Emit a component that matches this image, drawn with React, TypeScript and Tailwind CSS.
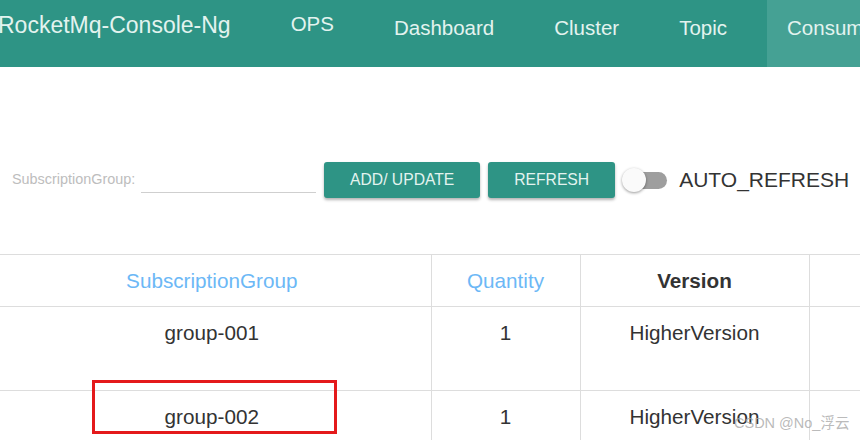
export default function App() {
  const nav = ["Dashboard", "Cluster", "Topic"];
  const rows = [
    { group: "group-001", qty: "1", version: "HigherVersion" },
    { group: "group-002", qty: "1", version: "HigherVersion" },
  ];

  return (
    <div className="relative w-full h-[440px] overflow-hidden bg-white font-['Liberation_Sans',Arial,sans-serif] text-[#333]">
      {/* top bar */}
      <div className="flex h-[67px] bg-[#2e9485] text-[#e3f3ef] -ml-[22px] gap-[20px] leading-[1.2]">
        <div className="px-[20px] pt-[12px] text-[23px] whitespace-nowrap">RocketMq-Console-Ng</div>
        <div className="px-[20px] pt-[12px] text-[20.5px]">OPS</div>
        {nav.map((n) => (
          <div key={n} className="px-[20px] pt-[16px] text-[20.5px]">
            {n}
          </div>
        ))}
        <div className="px-[20px] pt-[16px] text-[20.5px] bg-[#45a194] flex-1 whitespace-nowrap">Consumer</div>
      </div>

      {/* toolbar */}
      <div className="flex items-center h-[36px] mt-[95px] pl-[12px]">
        <span className="text-[14.4px] text-[#bdbdbd]">SubscriptionGroup:</span>
        <input className="ml-[6px] w-[175px] h-[26px] border-b border-[#cfcfcf] outline-none text-[14px]" />
        <button className="ml-[8px] w-[156px] h-[36px] rounded-[3px] bg-[#2e9485] text-[#e3f3ef] text-[15.7px] shadow-[0_2px_3px_rgba(0,0,0,0.3)]">
          ADD/ UPDATE
        </button>
        <button className="ml-[8px] w-[127px] h-[36px] rounded-[3px] bg-[#2e9485] text-[#e3f3ef] text-[15.7px] shadow-[0_2px_3px_rgba(0,0,0,0.3)]">
          REFRESH
        </button>
        <div className="relative ml-[7px] w-[45px] h-[26px] flex items-center">
          <div className="ml-[3px] w-[42px] h-[17px] rounded-full bg-[#9e9e9e]" />
          <div className="absolute left-0 top-[1px] w-[24px] h-[24px] rounded-full bg-[#fafafa] shadow-[0_1px_3px_rgba(0,0,0,0.4)]" />
        </div>
        <span className="ml-[12px] text-[21px] text-[#333]">AUTO_REFRESH</span>
      </div>

      {/* table */}
      <table className="mt-[56px] -ml-[7px] border-collapse table-fixed w-[920px] text-[20.7px]">
        <colgroup>
          <col className="w-[438px]" />
          <col className="w-[149px]" />
          <col className="w-[229px]" />
          <col />
        </colgroup>
        <thead>
          <tr className="h-[52px] border-t border-[#dddddd]">
            <th className="font-normal text-[#6cb8f6] border-b border-[#dddddd]">SubscriptionGroup</th>
            <th className="font-normal text-[#6cb8f6] border border-[#dddddd]">Quantity</th>
            <th className="font-bold text-[#333] border border-[#dddddd]">Version</th>
            <th className="border border-[#dddddd]" />
          </tr>
        </thead>
        <tbody>
          {rows.map((r, i) => (
            <tr key={r.group} className="h-[84px]">
              <td className="relative align-top text-center pt-[10px] border-b border-[#dddddd]">
                {r.group}
                {i === 1 && (
                  <div className="absolute left-[99px] top-[-11px] w-[245px] h-[54px] border-[3px] border-[#e4191b]" />
                )}
              </td>
              <td className="align-top text-center pt-[10px] border border-[#dddddd]">{r.qty}</td>
              <td className="align-top text-center pt-[10px] border border-[#dddddd]">{r.version}</td>
              <td className="border border-[#dddddd]" />
            </tr>
          ))}
        </tbody>
      </table>

      {/* watermark */}
      <div className="absolute left-[734px] top-[413px] text-[14.5px] text-[#a8a8a8]/80 font-['Liberation_Sans','Noto_Sans_CJK_SC',sans-serif] whitespace-nowrap">
        CSDN @No_浮云
      </div>
    </div>
  );
}
